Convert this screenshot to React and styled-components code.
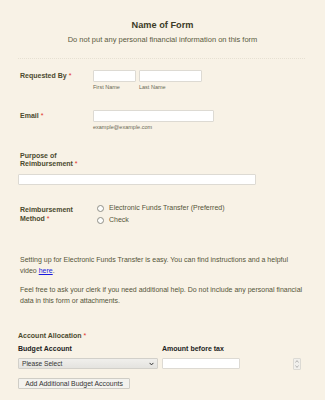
import styled, { createGlobalStyle } from "styled-components";

const GlobalStyle = createGlobalStyle`
  html, body {
    margin: 0;
    padding: 0;
    background: #f8f2e6;
  }
  body {
    font-family: "Liberation Sans", Arial, sans-serif;
  }
`;

const Page = styled.div`
  width: 325px;
  height: 400px;
  box-sizing: border-box;
  padding: 19px 20px 0 18px;
  background: #f8f2e6;
  color: #4b4a2e;
  overflow: hidden;
`;

const Header = styled.div`
  text-align: center;
  padding-left: 2px;
`;

const Title = styled.h1`
  margin: 0;
  font-size: 9.2px;
  line-height: 12px;
  font-weight: bold;
  color: #3c3c28;
`;

const Subtitle = styled.p`
  margin: 2.5px 0 0;
  font-size: 7.5px;
  line-height: 11px;
  color: #5a5a3e;
`;

const Separator = styled.div`
  margin-top: 13.5px;
  border-top: 1px dotted #e6e0d2;
`;

const FieldRow = styled.div`
  display: flex;
  align-items: flex-start;
  padding-left: 2px;
  margin-top: ${(p) => p.$top}px;
`;

const Label = styled.div`
  width: 73px;
  flex-shrink: 0;
  box-sizing: border-box;
  font-size: 7px;
  font-weight: bold;
  line-height: ${(p) => p.$lh || 12}px;
  padding-top: ${(p) => p.$pad || 0}px;
  color: #4b4a2e;
`;

const StackLabel = styled.div`
  padding-left: 2px;
  margin-top: ${(p) => p.$top}px;
  font-size: 7px;
  font-weight: bold;
  line-height: 8px;
  color: #4b4a2e;
`;

const Star = styled.span`
  color: #e2312b;
  font-weight: normal;
`;

const Inputs = styled.div`
  display: flex;
  gap: 3px;
`;

const Field = styled.div`
  display: flex;
  flex-direction: column;
`;

const TextBox = styled.div`
  width: ${(p) => p.$w}px;
  height: ${(p) => p.$h || 12}px;
  box-sizing: border-box;
  background: #fff;
  border: 1px solid #dddad3;
  border-radius: 1px;
`;

const Hint = styled.span`
  margin-top: 1px;
  font-size: 5.5px;
  line-height: 8px;
  color: #6a6a55;
`;

const WideBox = styled(TextBox)`
  margin-top: 6px;
`;

const Radios = styled.div`
  display: flex;
  flex-direction: column;
  padding-left: 4px;
`;

const RadioOption = styled.label`
  display: flex;
  align-items: center;
  gap: 5px;
  font-size: 7px;
  line-height: 12px;
  color: #55553a;
`;

const RadioCircle = styled.span`
  width: 7px;
  height: 7px;
  box-sizing: border-box;
  border-radius: 50%;
  border: 1px solid #8f8f88;
  background: #fdfdfb;
`;

const Paragraph = styled.p`
  margin: ${(p) => p.$top}px 0 0;
  padding-left: 2px;
  font-size: 7px;
  line-height: 11px;
  color: #55553a;
`;

const Link = styled.a`
  color: #1a1adf;
  text-decoration: underline;
`;

const SectionTitle = styled.div`
  margin-top: 25.5px;
  font-size: 7px;
  font-weight: bold;
  line-height: 10px;
  color: #4b4a2e;
`;

const ColumnHeads = styled.div`
  display: flex;
  margin-top: 3px;
  font-size: 7px;
  font-weight: bold;
  line-height: 10px;
  color: #222;
`;

const ColHead = styled.div`
  width: ${(p) => p.$w}px;
`;

const AllocationRow = styled.div`
  display: flex;
  align-items: flex-start;
  gap: 4px;
  margin-top: 4px;
`;

const Select = styled.div`
  width: 140px;
  height: 11px;
  box-sizing: border-box;
  display: flex;
  align-items: center;
  justify-content: space-between;
  padding: 0 3px 0 3px;
  background: linear-gradient(#f0efec, #e4e3df);
  border: 1px solid #d2d0ca;
  border-radius: 1px;
  font-size: 6.6px;
  color: #333;
`;

const Spinner = styled.div`
  margin-left: auto;
  margin-right: 4px;
  width: 8px;
  height: 12px;
  box-sizing: border-box;
  display: flex;
  flex-direction: column;
  align-items: center;
  justify-content: space-around;
  background: #f1f0ec;
  border: 1px solid #dcdad4;
  border-radius: 1px;
`;

const AddButton = styled.button`
  display: block;
  margin-top: 8px;
  height: 11px;
  width: 112px;
  padding: 0;
  box-sizing: border-box;
  background: #f3f2ee;
  border: 1px solid #cfcdc6;
  border-radius: 1px;
  font-family: "Liberation Sans", Arial, sans-serif;
  font-size: 6.9px;
  line-height: 9px;
  color: #333;
`;

const Chevron = () => (
  <svg width="5" height="4" viewBox="0 0 5 4">
    <path d="M0.6 0.9 L2.5 2.9 L4.4 0.9" fill="none" stroke="#333" strokeWidth="1" />
  </svg>
);

const Arrow = ({ up }) => (
  <svg width="4" height="3" viewBox="0 0 4 3">
    <path d={up ? "M0.5 2.5 L2 0.6 L3.5 2.5" : "M0.5 0.5 L2 2.4 L3.5 0.5"} fill="none" stroke="#999" strokeWidth="0.7" />
  </svg>
);

export default function App() {
  return (
    <Page>
      <GlobalStyle />
      <Header>
        <Title>Name of Form</Title>
        <Subtitle>Do not put any personal financial information on this form</Subtitle>
      </Header>
      <Separator />

      <FieldRow $top={11}>
        <Label>
          Requested By <Star>*</Star>
        </Label>
        <Inputs>
          <Field>
            <TextBox $w={43} />
            <Hint>First Name</Hint>
          </Field>
          <Field>
            <TextBox $w={63} />
            <Hint>Last Name</Hint>
          </Field>
        </Inputs>
      </FieldRow>

      <FieldRow $top={19}>
        <Label>
          Email <Star>*</Star>
        </Label>
        <Field>
          <TextBox $w={121} />
          <Hint>example@example.com</Hint>
        </Field>
      </FieldRow>

      <StackLabel $top={21}>
        Purpose of
        <br />
        Reimbursement <Star>*</Star>
      </StackLabel>
      <WideBox $w={238} $h={11} />

      <FieldRow $top={17}>
        <Label $lh={9} $pad={3}>
          Reimbursement
          <br />
          Method <Star>*</Star>
        </Label>
        <Radios>
          <RadioOption>
            <RadioCircle />
            Electronic Funds Transfer (Preferred)
          </RadioOption>
          <RadioOption>
            <RadioCircle />
            Check
          </RadioOption>
        </Radios>
      </FieldRow>

      <Paragraph $top={27.5}>
        Setting up for Electronic Funds Transfer is easy. You can find instructions and a helpful video{" "}
        <Link href="#">here</Link>.
      </Paragraph>
      <Paragraph $top={8}>
        Feel free to ask your clerk if you need additional help. Do not include any personal financial data in
        this form or attachments.
      </Paragraph>

      <SectionTitle>
        Account Allocation <Star>*</Star>
      </SectionTitle>
      <ColumnHeads>
        <ColHead $w={144}>Budget Account</ColHead>
        <ColHead $w={100}>Amount before tax</ColHead>
      </ColumnHeads>
      <AllocationRow>
        <Select>
          <span>Please Select</span>
          <Chevron />
        </Select>
        <TextBox $w={78} $h={11} />
        <Spinner>
          <Arrow up />
          <Arrow />
        </Spinner>
      </AllocationRow>
      <AddButton type="button">Add Additional Budget Accounts</AddButton>
    </Page>
  );
}
